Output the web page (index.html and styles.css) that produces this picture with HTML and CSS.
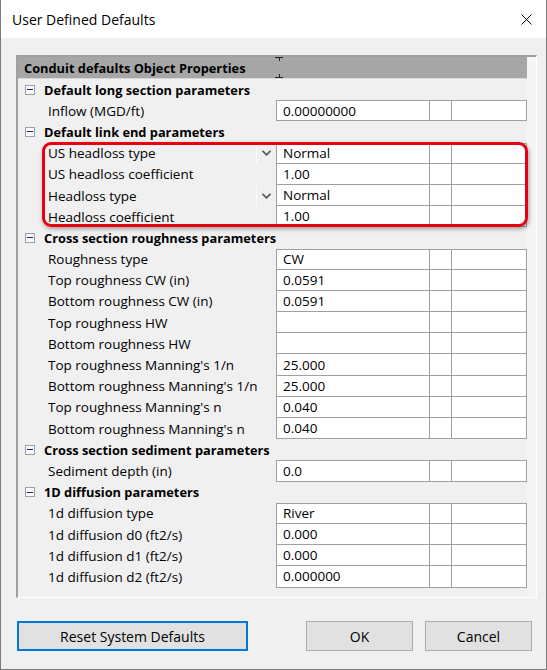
FILE: index.html
```html
<!DOCTYPE html>
<html>
<head>
<meta charset="utf-8">
<link rel="stylesheet" href="styles.css">
</head>
<body>
<div class="window">
  <div class="titlebar">
    <span class="title">User Defined Defaults</span>
    <svg class="close" width="11" height="11" viewBox="0 0 11 11"><path d="M0.5 0.5 L10.5 10.5 M10.5 0.5 L0.5 10.5" stroke="#000" stroke-width="1" fill="none"/></svg>
  </div>
  <div class="client">
    <div class="panel">
      <div class="grid">
        <div class="header">Conduit defaults Object Properties
          <svg class="split" width="8" height="22" viewBox="0 0 8 22"><path d="M0 0.5 H8 M4.5 0 V4 M4.5 17 V21 M0 20.5 H8" stroke="#222" stroke-width="1" fill="none"/></svg>
        </div>

        <div class="row group"><span class="minus"></span>Default long section parameters</div>
        <div class="row prop"><span class="label"><span class="txt">Inflow (MGD/ft)</span></span><span class="vals"><span class="v1">0.00000000</span><span class="v2"></span><span class="v3"></span></span></div>

        <div class="row group"><span class="minus"></span>Default link end parameters</div>
        <div class="row prop"><span class="label"><span class="txt">US headloss type</span><span class="dd"><svg width="9" height="6" viewBox="0 0 9 6"><path d="M0.5 0.8 L4.5 4.8 L8.5 0.8" stroke="#555" stroke-width="1.6" fill="none"/></svg></span></span><span class="vals"><span class="v1">Normal</span><span class="v2"></span><span class="v3"></span></span></div>
        <div class="row prop"><span class="label"><span class="txt">US headloss coefficient</span></span><span class="vals"><span class="v1">1.00</span><span class="v2"></span><span class="v3"></span></span></div>
        <div class="row prop"><span class="label"><span class="txt">Headloss type</span><span class="dd"><svg width="9" height="6" viewBox="0 0 9 6"><path d="M0.5 0.8 L4.5 4.8 L8.5 0.8" stroke="#555" stroke-width="1.6" fill="none"/></svg></span></span><span class="vals"><span class="v1">Normal</span><span class="v2"></span><span class="v3"></span></span></div>
        <div class="row prop"><span class="label"><span class="txt">Headloss coefficient</span></span><span class="vals"><span class="v1">1.00</span><span class="v2"></span><span class="v3"></span></span></div>

        <div class="row group"><span class="minus"></span>Cross section roughness parameters</div>
        <div class="row prop"><span class="label"><span class="txt">Roughness type</span></span><span class="vals"><span class="v1">CW</span><span class="v2"></span><span class="v3"></span></span></div>
        <div class="row prop"><span class="label"><span class="txt">Top roughness CW (in)</span></span><span class="vals"><span class="v1">0.0591</span><span class="v2"></span><span class="v3"></span></span></div>
        <div class="row prop"><span class="label"><span class="txt">Bottom roughness CW (in)</span></span><span class="vals"><span class="v1">0.0591</span><span class="v2"></span><span class="v3"></span></span></div>
        <div class="row prop"><span class="label"><span class="txt">Top roughness HW</span></span><span class="vals"><span class="v1"></span><span class="v2"></span><span class="v3"></span></span></div>
        <div class="row prop"><span class="label"><span class="txt">Bottom roughness HW</span></span><span class="vals"><span class="v1"></span><span class="v2"></span><span class="v3"></span></span></div>
        <div class="row prop"><span class="label"><span class="txt">Top roughness Manning's 1/n</span></span><span class="vals"><span class="v1">25.000</span><span class="v2"></span><span class="v3"></span></span></div>
        <div class="row prop"><span class="label"><span class="txt">Bottom roughness Manning's 1/n</span></span><span class="vals"><span class="v1">25.000</span><span class="v2"></span><span class="v3"></span></span></div>
        <div class="row prop"><span class="label"><span class="txt">Top roughness Manning's n</span></span><span class="vals"><span class="v1">0.040</span><span class="v2"></span><span class="v3"></span></span></div>
        <div class="row prop"><span class="label"><span class="txt">Bottom roughness Manning's n</span></span><span class="vals"><span class="v1">0.040</span><span class="v2"></span><span class="v3"></span></span></div>

        <div class="row group"><span class="minus"></span>Cross section sediment parameters</div>
        <div class="row prop"><span class="label"><span class="txt">Sediment depth (in)</span></span><span class="vals"><span class="v1">0.0</span><span class="v2"></span><span class="v3"></span></span></div>

        <div class="row group"><span class="minus"></span>1D diffusion parameters</div>
        <div class="row prop"><span class="label"><span class="txt">1d diffusion type</span></span><span class="vals"><span class="v1">River</span><span class="v2"></span><span class="v3"></span></span></div>
        <div class="row prop"><span class="label"><span class="txt">1d diffusion d0 (ft2/s)</span></span><span class="vals"><span class="v1">0.000</span><span class="v2"></span><span class="v3"></span></span></div>
        <div class="row prop"><span class="label"><span class="txt">1d diffusion d1 (ft2/s)</span></span><span class="vals"><span class="v1">0.000</span><span class="v2"></span><span class="v3"></span></span></div>
        <div class="row prop"><span class="label"><span class="txt">1d diffusion d2 (ft2/s)</span></span><span class="vals"><span class="v1">0.000000</span><span class="v2"></span><span class="v3"></span></span></div>
      </div>
      <div class="strip"></div>
      <div class="highlight"></div>
    </div>
    <div class="buttons">
      <button class="btn reset">Reset System Defaults</button>
      <button class="btn ok">OK</button>
      <button class="btn cancel">Cancel</button>
    </div>
  </div>
</div>
</body>
</html>
```
FILE: styles.css
```css
* { box-sizing: border-box; }
html, body { margin: 0; padding: 0; }
body {
  width: 547px;
  height: 670px;
  overflow: hidden;
  background: #f0f0f0;
  font-family: "Open Sans", "Noto Sans", sans-serif;
  font-size: 13.5px;
  color: #000;
}
.window {
  width: 547px;
  height: 670px;
  border: 1px solid #7a7a7a;
  border-top: none;
  display: flex;
  flex-direction: column;
  background: #f0f0f0;
}
.titlebar {
  height: 38px;
  flex: 0 0 38px;
  background: #fff;
  display: flex;
  align-items: center;
  justify-content: space-between;
  padding: 0 14px 0 11px;
  font-size: 14px;
}
.close { display: block; }
.client {
  flex: 1;
  padding: 17px 0 0 15px;
}
.panel {
  position: relative;
  width: 521px;
  height: 543px;
  border-left: 2px solid #a0a0a0;
  border-top: 2px solid #a0a0a0;
  border-right: 1px solid #fff;
  border-bottom: 1px solid #fff;
  display: flex;
  background: #f0f0f0;
}
.grid {
  width: 509px;
  flex: 0 0 509px;
}
.strip {
  flex: 1;
  background: #f5f5f5;
}
.header {
  position: relative;
  height: 22px;
  background: #a6a6a6;
  border-bottom: 1px solid #d8d8d8;
  font-weight: 700;
  font-size: 12.8px;
  padding-left: 6px;
  display: flex;
  align-items: center;
}
.split {
  position: absolute;
  left: 257px;
  top: 0;
}
.row {
  height: 21.2px;
  display: flex;
}
.group {
  align-items: center;
  font-weight: 700;
  font-size: 12.8px;
  padding-left: 7px;
}
.minus {
  position: relative;
  width: 10px;
  height: 10px;
  border: 1px solid #9aa0a8;
  background: #fafafa;
  margin-right: 9px;
  flex: 0 0 10px;
}
.minus::after {
  content: "";
  position: absolute;
  left: 1px;
  right: 1px;
  top: 3.5px;
  height: 1px;
  background: #1e2a66;
}
.label {
  flex: 0 0 258px;
  display: flex;
  align-items: center;
  padding-left: 30px;
}
.txt {
  flex: 1;
  white-space: nowrap;
}
.dd {
  width: 20px;
  align-self: stretch;
  border-left: 1px solid #fbfbfb;
  display: flex;
  align-items: center;
  justify-content: center;
}
.dd svg { display: block; }
.vals {
  flex: 1;
  display: flex;
  border-bottom: 1px solid #a0a0a0;
}
.group + .prop .vals {
  border-top: 1px solid #a0a0a0;
}
.v1, .v2, .v3 {
  background: #fff;
  border-right: 1px solid #a0a0a0;
}
.v1 {
  width: 154px;
  border-left: 1px solid #a0a0a0;
  padding-left: 6px;
  display: flex;
  align-items: center;
  white-space: nowrap;
}
.v2 { width: 22px; }
.v3 { width: 75px; }
.highlight {
  position: absolute;
  left: 24px;
  top: 85px;
  width: 486px;
  height: 85px;
  border: 3px solid #e60012;
  border-radius: 9px;
  box-shadow: 1px 2px 4px rgba(0, 0, 0, 0.35);
  pointer-events: none;
}
.buttons {
  display: flex;
  margin-top: 23px;
  padding-left: 1px;
}
.btn {
  height: 30px;
  background: #e1e1e1;
  border: 1px solid #adadad;
  font-family: inherit;
  font-size: 14px;
  color: #000;
  padding: 0;
}
.reset {
  width: 231px;
  border: 2px solid #0078d7;
}
.ok {
  width: 107px;
  margin-left: 58px;
}
.cancel {
  width: 107px;
  margin-left: 12px;
}
```
